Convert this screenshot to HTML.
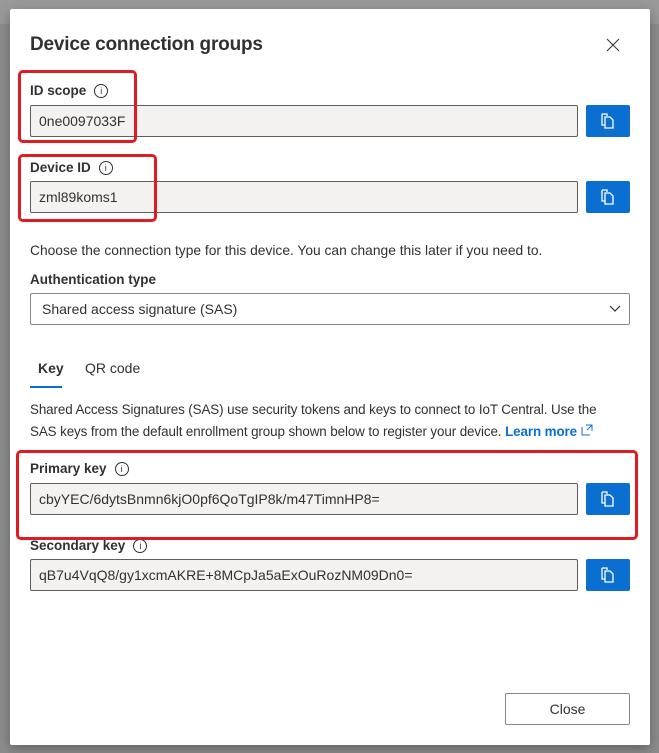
<!DOCTYPE html><html><head><style>
body{margin:0;width:659px;height:753px;background:#8c8c8c;font-family:"Liberation Sans",sans-serif;color:#323130;position:relative;overflow:hidden}
.top{position:absolute;left:0;top:0;width:659px;height:24px;background:#999}
.dlg{position:absolute;left:10px;top:9px;width:640px;height:736px;background:#fff;border-radius:2px;box-shadow:0 4px 12px rgba(0,0,0,.3)}
.a{position:absolute}
.lbl{position:absolute;left:30px;font-size:13.5px;font-weight:bold;color:#323130}
.inp{position:absolute;left:30px;height:30px;background:#f3f2f1;border:1px solid #605e5c;border-radius:2px;font-size:14px;line-height:30px;padding-left:8px;box-sizing:content-box;width:538px}
.btn{position:absolute;left:586px;width:44px;height:32px;background:#0b6fd1;border-radius:2px}
.btn svg{position:absolute;left:14px;top:8px}
.info{display:inline-block;width:12px;height:12px;border:1px solid #323130;border-radius:50%;font-size:9px;line-height:12px;text-align:center;font-weight:normal;margin-left:8px;vertical-align:1px}
.red{position:absolute;border:3px solid #e11b22;border-radius:5px}
</style></head><body>
<div class="top"></div>
<div class="dlg"></div>
<div class="a" style="left:30px;top:34px;font-size:19px;font-weight:bold;letter-spacing:-0.2px;color:#323130">Device connection groups</div>
<svg class="a" style="left:606px;top:38px" width="14" height="14"><path d="M1 1L13 13M13 1L1 13" stroke="#323130" stroke-width="1"/></svg>
<div class="lbl" style="top:83px">ID scope<span class="info">i</span></div>
<div class="inp" style="top:105px">0ne0097033F</div>
<div class="btn" style="top:105px"><svg width="16" height="16"><path d="M2 1h5v2M2 1v11h3M5 4h5l3 3v8H5z" fill="none" stroke="#fff" stroke-width="1.3"/></svg></div>
<div class="lbl" style="top:160px">Device ID<span class="info">i</span></div>
<div class="inp" style="top:181px">zml89koms1</div>
<div class="btn" style="top:181px"><svg width="16" height="16"><path d="M2 1h5v2M2 1v11h3M5 4h5l3 3v8H5z" fill="none" stroke="#fff" stroke-width="1.3"/></svg></div>
<div class="a" style="left:30px;top:243px;font-size:13.8px">Choose the connection type for this device. You can change this later if you need to.</div>
<div class="lbl" style="top:272px">Authentication type</div>
<div class="a" style="left:30px;top:293px;height:30px;border:1px solid #8a8886;border-radius:2px;font-size:14px;line-height:30px;padding-left:11px;box-sizing:content-box;width:587px">Shared access signature (SAS)</div>
<svg class="a" style="left:609px;top:305px" width="12" height="8"><path d="M1 1l5 5 5-5" fill="none" stroke="#323130" stroke-width="1.2"/></svg>
<div class="a" style="left:38px;top:360px;font-size:14px;font-weight:bold">Key</div>
<div class="a" style="left:30px;top:386px;width:32px;height:2px;background:#0b6fd1"></div>
<div class="a" style="left:85px;top:360px;font-size:14px">QR code</div>
<div class="a" style="left:30px;top:399px;width:620px;font-size:13.4px;line-height:22px;letter-spacing:-0.1px">Shared Access Signatures (SAS) use security tokens and keys to connect to IoT Central. Use the<br>SAS keys from the default enrollment group shown below to register your device. <span style="color:#0b6fd1;font-weight:bold">Learn more</span> <svg width="12" height="12"><path d="M1 3v8h8M5 1h6v6M11 1L6 6" fill="none" stroke="#0b6fd1"/></svg></div>
<div class="lbl" style="top:461px">Primary key<span class="info">i</span></div>
<div class="inp" style="top:483px">cbyYEC/6dytsBnmn6kjO0pf6QoTgIP8k/m47TimnHP8=</div>
<div class="btn" style="top:483px"><svg width="16" height="16"><path d="M2 1h5v2M2 1v11h3M5 4h5l3 3v8H5z" fill="none" stroke="#fff" stroke-width="1.3"/></svg></div>
<div class="lbl" style="top:538px">Secondary key<span class="info">i</span></div>
<div class="inp" style="top:559px">qB7u4VqQ8/gy1xcmAKRE+8MCpJa5aExOuRozNM09Dn0=</div>
<div class="btn" style="top:559px"><svg width="16" height="16"><path d="M2 1h5v2M2 1v11h3M5 4h5l3 3v8H5z" fill="none" stroke="#fff" stroke-width="1.3"/></svg></div>
<div class="a" style="left:505px;top:693px;width:123px;height:30px;border:1px solid #8a8886;border-radius:2px;font-size:14px;line-height:30px;text-align:center">Close</div>
<div class="red" style="left:18px;top:70px;width:113px;height:67px"></div>
<div class="red" style="left:18px;top:154px;width:133px;height:62px"></div>
<div class="red" style="left:16px;top:450px;width:616px;height:84px"></div>
</body></html>
